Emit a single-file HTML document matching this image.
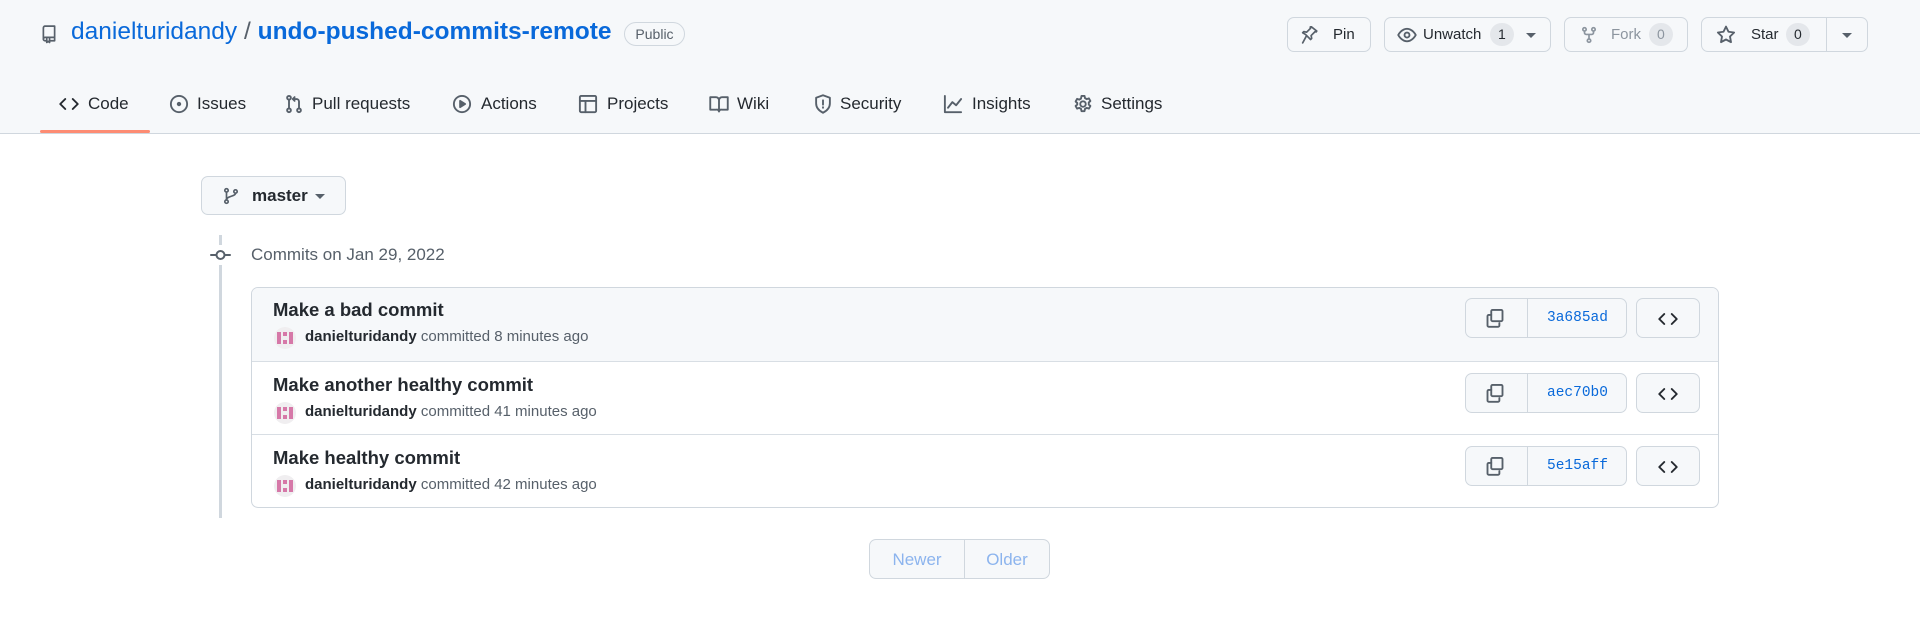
<!DOCTYPE html>
<html><head><meta charset="utf-8"><style>
*{box-sizing:border-box;margin:0;padding:0}
body{width:1920px;height:635px;background:#fff;font-family:"Liberation Sans",sans-serif;color:#24292f;position:relative;overflow:hidden}
.a{position:absolute}
.hdr{left:0;top:0;width:1920px;height:134px;background:#f6f8fa;border-bottom:1px solid #d0d7de}
.tab{position:absolute;top:92px;font-size:17px;color:#24292f;height:24px;line-height:24px;white-space:nowrap}
.tab svg{position:absolute;left:0;top:2px}
.btn{position:absolute;border:1px solid #d0d7de;border-radius:7px;background:#f6f8fa;font-size:15px;color:#24292f}
.cnt{display:inline-block;background:#e4e7eb;border-radius:12px;padding:0 8px;height:23px;line-height:23px;font-size:14px}
svg{fill:none;stroke:#57606a;stroke-width:1.5;stroke-linecap:round;stroke-linejoin:round}
.row{position:absolute;left:0;width:1466px;height:73px;border-top:1px solid #d8dee4}
.row .t{position:absolute;left:21px;top:12px;font-size:18.5px;font-weight:bold;color:#24292f}
.row .m{position:absolute;left:53px;top:41px;font-size:15px;color:#57606a}
.row .m b{color:#24292f}
.av{position:absolute;left:22px;top:40px;width:22px;height:22px;border-radius:50%;background:#f0eef0}
.av i{position:absolute;background:#d678a8;width:4px}
.cg{position:absolute;left:1213px;top:11px;width:162px;height:40px;border:1px solid #d0d7de;border-radius:7px;background:#f6f8fa}
.cg .s{position:absolute;left:61px;top:0;width:1px;height:38px;background:#d0d7de}
.cg .h{position:absolute;left:62px;width:99px;top:0;height:38px;line-height:38px;text-align:center;font-family:"Liberation Mono",monospace;font-size:14.5px;color:#0969da}
.cb{position:absolute;left:1384px;top:11px;width:64px;height:40px;border:1px solid #d0d7de;border-radius:7px;background:#f6f8fa}
</style></head><body>
<div class="a hdr"></div>
<svg class="a" style="left:40px;top:24px" width="18" height="20" viewBox="0 0 16 16"><path d="M3 13V2.5A1.5 1.5 0 0 1 4.5 1H13v10H4.5A1.5 1.5 0 0 0 3 12.5v0A1.5 1.5 0 0 0 4.5 14H6M9 14h4v-3M6 12v3.5l1.25-1 1.25 1V12"/></svg>
<div class="a" style="left:71px;top:18px;font-size:24.5px;color:#0969da;white-space:nowrap">danielturidandy <span style="color:#57606a">/</span> <b style="font-weight:bold">undo-pushed-commits-remote</b></div>
<div class="a" style="left:624px;top:22px;width:61px;height:24px;border:1px solid #d0d7de;border-radius:12px;font-size:14px;color:#57606a;text-align:center;line-height:22px">Public</div>

<div class="btn" style="left:1287px;top:17px;width:84px;height:35px"><svg class="a" style="left:13px;top:8px" width="18" height="18" viewBox="0 0 16 16"><path d="M5 8.5L1.5 15M4 7.5l4.5 4.5 1-1-.5-2.5 3.5-3.5 1 .3.5-.8L9 .5l-.8.5.3 1L5 5.5 2.5 5l-1 1z"/></svg><span class="a" style="left:45px;top:8px">Pin</span></div>
<div class="btn" style="left:1384px;top:17px;width:167px;height:35px"><svg class="a" style="left:12px;top:7px" width="20" height="20" viewBox="0 0 16 16"><path d="M1 8s2.5-5 7-5 7 5 7 5-2.5 5-7 5-7-5-7-5z"/><circle cx="8" cy="8" r="2"/></svg><span class="a" style="left:38px;top:8px">Unwatch</span><span class="cnt a" style="left:105px;top:5px">1</span><span class="a" style="left:141px;top:15px;border:5px solid transparent;border-top-color:#57606a"></span></div>
<div class="btn" style="left:1564px;top:17px;width:124px;height:35px;color:#8c959f"><svg class="a" style="left:15px;top:8px" width="18" height="18" viewBox="0 0 16 16"><circle cx="4" cy="3" r="1.5" stroke="#8c959f"/><circle cx="12" cy="3" r="1.5" stroke="#8c959f"/><circle cx="8" cy="13" r="1.5" stroke="#8c959f"/><path stroke="#8c959f" d="M4 4.5V6a1.5 1.5 0 0 0 1.5 1.5h5A1.5 1.5 0 0 0 12 6V4.5M8 7.5v4"/></svg><span class="a" style="left:46px;top:8px">Fork</span><span class="cnt a" style="left:84px;top:5px;color:#8c959f">0</span></div>
<div class="btn" style="left:1701px;top:17px;width:167px;height:35px"><svg class="a" style="left:14px;top:7px" width="20" height="20" viewBox="0 0 16 16"><path d="M8 1.3l2 4.1 4.5.6-3.3 3.2.8 4.5L8 11.6l-4 2.1.8-4.5L1.5 6l4.5-.6z"/></svg><span class="a" style="left:49px;top:8px">Star</span><span class="cnt a" style="left:84px;top:5px">0</span><span class="a" style="left:124px;top:0;width:1px;height:33px;background:#d0d7de"></span><span class="a" style="left:140px;top:15px;border:5px solid transparent;border-top-color:#57606a"></span></div>

<div class="tab" style="left:59px"><svg width="20" height="20" viewBox="0 0 16 16"><path stroke="#24292f" d="M5 4L1 8l4 4M11 4l4 4-4 4"/></svg><span style="margin-left:29px">Code</span></div>
<div class="a" style="left:40px;top:130px;width:110px;height:3px;background:#fd8c73;border-radius:2px"></div>
<div class="tab" style="left:169px"><svg width="20" height="20" viewBox="0 0 16 16"><circle cx="8" cy="8" r="6.5"/><circle cx="8" cy="8" r="1" fill="#57606a"/></svg><span style="margin-left:28px">Issues</span></div>
<div class="tab" style="left:284px"><svg width="20" height="20" viewBox="0 0 16 16"><circle cx="4" cy="3" r="1.5"/><circle cx="4" cy="13" r="1.5"/><circle cx="12" cy="13" r="1.5"/><path d="M4 4.5v7M12 11.5V6a2 2 0 0 0-2-2H7M8.5 2.5L7 4l1.5 1.5"/></svg><span style="margin-left:28px">Pull requests</span></div>
<div class="tab" style="left:452px"><svg width="20" height="20" viewBox="0 0 16 16"><circle cx="8" cy="8" r="6.5"/><path d="M6.5 5.5v5l4-2.5z" fill="#57606a"/></svg><span style="margin-left:29px">Actions</span></div>
<div class="tab" style="left:578px"><svg width="20" height="20" viewBox="0 0 16 16"><rect x="1.5" y="1.5" width="13" height="13" rx="1"/><path d="M1.5 5.5h13M6 5.5v9"/></svg><span style="margin-left:29px">Projects</span></div>
<div class="tab" style="left:709px"><svg width="20" height="20" viewBox="0 0 16 16"><path d="M1 2.5h4.5A2.5 2.5 0 0 1 8 5v9a2 2 0 0 0-2-1.5H1zM15 2.5h-4.5A2.5 2.5 0 0 0 8 5v9a2 2 0 0 1 2-1.5h5z"/></svg><span style="margin-left:28px">Wiki</span></div>
<div class="tab" style="left:813px"><svg width="20" height="20" viewBox="0 0 16 16"><path d="M8 1L2.5 3v4.5c0 3.5 2.5 6 5.5 7.5 3-1.5 5.5-4 5.5-7.5V3z"/><path d="M8 5v3.5M8 10.5v.5"/></svg><span style="margin-left:27px">Security</span></div>
<div class="tab" style="left:943px"><svg width="20" height="20" viewBox="0 0 16 16"><path d="M1.5 1.5v13h13M4 11l3.5-4.5 3 2.5L14.5 4"/></svg><span style="margin-left:29px">Insights</span></div>
<div class="tab" style="left:1073px"><svg width="20" height="20" viewBox="0 0 16 16"><circle cx="8" cy="8" r="2.2"/><path d="M6.8 1.5h2.4l.4 1.8 1.4.8 1.7-.6 1.2 2.1-1.3 1.2v1.6l1.3 1.2-1.2 2.1-1.7-.6-1.4.8-.4 1.8H6.8l-.4-1.8-1.4-.8-1.7.6-1.2-2.1 1.3-1.2V7.2L2.1 6l1.2-2.1 1.7.6 1.4-.8z"/></svg><span style="margin-left:28px">Settings</span></div>

<div class="btn" style="left:201px;top:176px;width:145px;height:39px;font-size:17px;font-weight:bold"><svg class="a" style="left:20px;top:10px" width="18" height="18" viewBox="0 0 16 16"><circle cx="4" cy="3" r="1.5"/><circle cx="12" cy="4" r="1.5"/><circle cx="4" cy="13" r="1.5"/><path d="M4 4.5v7M12 5.5c0 3-8 2.5-8 6"/></svg><span class="a" style="left:50px;top:9px">master</span><span class="a" style="left:113px;top:17px;border:5px solid transparent;border-top-color:#57606a"></span></div>

<div class="a" style="left:219px;top:235px;width:3px;height:283px;background:#d0d7de"></div>
<svg class="a" style="left:210px;top:245px;background:#fff" width="21" height="20" viewBox="0 0 21 20"><circle cx="10.5" cy="10" r="4" stroke="#57606a" stroke-width="2"/><path d="M1 10h5M15 10h5" stroke="#57606a" stroke-width="2"/></svg>
<div class="a" style="left:251px;top:245px;font-size:17px;color:#57606a">Commits on Jan 29, 2022</div>

<div class="a" style="left:251px;top:287px;width:1468px;height:221px;border:1px solid #d0d7de;border-radius:7px;overflow:hidden">
<div class="row" style="top:-1px;height:74px;background:#f6f8fa;border-top:none">
<div class="t">Make a bad commit</div><div class="av"><i style="left:3px;top:5px;height:12px"></i><i style="left:9px;top:5px;height:4px"></i><i style="left:9px;top:13px;height:4px"></i><i style="left:15px;top:5px;height:12px"></i></div><div class="m"><b>danielturidandy</b> committed 8 minutes ago</div>
<div class="cg"><svg class="a" style="left:19px;top:9px" width="20" height="20" viewBox="0 0 16 16"><path d="M5 5.5H3a1 1 0 0 0-1 1V14a1 1 0 0 0 1 1h7.5a1 1 0 0 0 1-1v-2"/><rect x="5" y="1.5" width="9" height="9" rx="1"/></svg><div class="s"></div><div class="h">3a685ad</div></div>
<div class="cb"><svg class="a" style="left:21px;top:10px" width="20" height="20" viewBox="0 0 16 16"><path stroke="#24292f" d="M5 4L1 8l4 4M11 4l4 4-4 4"/></svg></div></div>
<div class="row" style="top:73px">
<div class="t">Make another healthy commit</div><div class="av"><i style="left:3px;top:5px;height:12px"></i><i style="left:9px;top:5px;height:4px"></i><i style="left:9px;top:13px;height:4px"></i><i style="left:15px;top:5px;height:12px"></i></div><div class="m"><b>danielturidandy</b> committed 41 minutes ago</div>
<div class="cg"><svg class="a" style="left:19px;top:9px" width="20" height="20" viewBox="0 0 16 16"><path d="M5 5.5H3a1 1 0 0 0-1 1V14a1 1 0 0 0 1 1h7.5a1 1 0 0 0 1-1v-2"/><rect x="5" y="1.5" width="9" height="9" rx="1"/></svg><div class="s"></div><div class="h">aec70b0</div></div>
<div class="cb"><svg class="a" style="left:21px;top:10px" width="20" height="20" viewBox="0 0 16 16"><path stroke="#24292f" d="M5 4L1 8l4 4M11 4l4 4-4 4"/></svg></div></div>
<div class="row" style="top:146px">
<div class="t">Make healthy commit</div><div class="av"><i style="left:3px;top:5px;height:12px"></i><i style="left:9px;top:5px;height:4px"></i><i style="left:9px;top:13px;height:4px"></i><i style="left:15px;top:5px;height:12px"></i></div><div class="m"><b>danielturidandy</b> committed 42 minutes ago</div>
<div class="cg"><svg class="a" style="left:19px;top:9px" width="20" height="20" viewBox="0 0 16 16"><path d="M5 5.5H3a1 1 0 0 0-1 1V14a1 1 0 0 0 1 1h7.5a1 1 0 0 0 1-1v-2"/><rect x="5" y="1.5" width="9" height="9" rx="1"/></svg><div class="s"></div><div class="h">5e15aff</div></div>
<div class="cb"><svg class="a" style="left:21px;top:10px" width="20" height="20" viewBox="0 0 16 16"><path stroke="#24292f" d="M5 4L1 8l4 4M11 4l4 4-4 4"/></svg></div></div>
</div>

<div class="a" style="left:869px;top:539px;width:181px;height:40px;border:1px solid #d0d7de;border-radius:7px;background:#f6f8fa;font-size:17px;color:#8cb4ee">
<span class="a" style="left:0;width:94px;top:10px;text-align:center">Newer</span>
<span class="a" style="left:94px;top:0;width:1px;height:38px;background:#d0d7de"></span>
<span class="a" style="left:95px;width:84px;top:10px;text-align:center">Older</span></div>
</body></html>
